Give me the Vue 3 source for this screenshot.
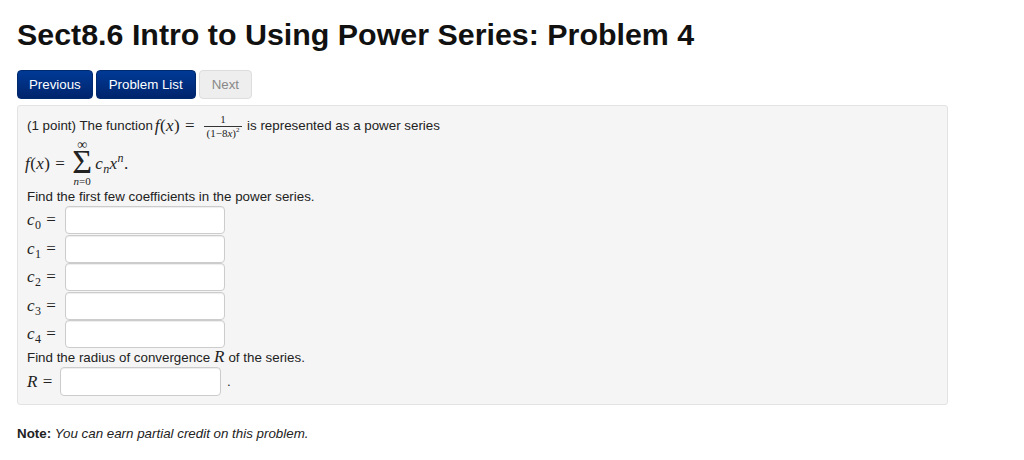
<template>
  <div class="page">
    <h1 class="title">Sect8.6 Intro to Using Power Series: Problem 4</h1>

    <div class="nav">
      <button type="button" class="btn prev">Previous</button>
      <button type="button" class="btn">Problem List</button>
      <button type="button" class="btn disabled">Next</button>
    </div>

    <div class="problem">
      <div class="line intro">
        <span>(1 point) The function</span>
        <span class="math fx"><i>f</i>(<i>x</i>)<span class="eq">=</span></span>
        <span class="frac">
          <span class="num">1</span>
          <span class="den">(1−8<i>x</i>)<sup>2</sup></span>
        </span>
        <span class="after-frac">is represented as a power series</span>
      </div>

      <div class="series math">
        <span><i>f</i>(<i>x</i>)<span class="eq">=</span></span>
        <span class="sum">
          <span class="limit top">∞</span>
          <span class="sigma">Σ</span>
          <span class="limit"><i>n</i>=0</span>
        </span>
        <span class="term"><i>c<sub>n</sub>x<sup>n</sup></i>.</span>
      </div>

      <div class="line find">Find the first few coefficients in the power series.</div>

      <div class="answers">
        <div v-for="n in coefficients" :key="n" class="answer">
          <span class="math label"><i>c</i><sub>{{ n }}</sub><span class="eq">=</span></span>
          <input type="text" class="field" />
        </div>
      </div>

      <div class="line">Find the radius of convergence <i class="math">R</i> of the series.</div>

      <div class="answer r-row">
        <span class="math label r-label"><i>R</i><span class="eq">=</span></span>
        <input type="text" class="field" />
        <span class="dot">.</span>
      </div>
    </div>

    <p class="note"><b>Note:</b> <i>You can earn partial credit on this problem.</i></p>
  </div>
</template>

<script setup>
const coefficients = [0, 1, 2, 3, 4]
</script>

<style>
html, body {
  background: #fff;
}
</style>

<style scoped>
.page {
  width: 1024px;
  height: 460px;
  overflow: hidden;
  box-sizing: border-box;
  padding: 17px 0 0 17px;
  font-family: "Liberation Sans", Arial, sans-serif;
  font-size: 13.35px;
  color: #222;
}
.title {
  margin: 0;
  font-size: 30.4px;
  line-height: 34px;
  font-weight: 700;
  color: #111;
}
.nav {
  display: flex;
  gap: 3px;
  margin-top: 19px;
}
.btn {
  height: 29px;
  padding: 0 12px;
  border: 1px solid #002a6e;
  border-radius: 4px;
  background: linear-gradient(#003a96, #00246c);
  color: #fff;
  font-family: inherit;
  font-size: 13.3px;
}
.btn.prev {
  padding: 0 11px;
}
.btn.disabled {
  border-color: #ddd;
  background: #eee;
  color: #888;
}
.problem {
  width: 931px;
  height: 300px;
  box-sizing: border-box;
  margin-top: 6px;
  padding: 0 0 0 9px;
  background: #f5f5f5;
  border: 1px solid #e3e3e3;
  border-radius: 3px;
}
.line {
  line-height: 18px;
}
.math {
  font-family: "Liberation Serif", "Times New Roman", serif;
  font-size: 17px;
  letter-spacing: 0.4px;
}
.eq {
  margin: 0 7px 0 5px;
}
.intro {
  display: flex;
  align-items: center;
  height: 38px;
  padding-top: 1px;
}
.fx {
  margin-left: 2px;
}
.fx .eq {
  margin-right: 9px;
}
.frac {
  display: inline-flex;
  flex-direction: column;
  align-items: center;
  width: 38px;
  margin-top: -1px;
  font-family: "Liberation Serif", "Times New Roman", serif;
  font-size: 11px;
  line-height: 12px;
}
.num {
  width: 100%;
  text-align: center;
  border-bottom: 1px solid #333;
  padding-bottom: 1px;
}
.den {
  white-space: nowrap;
}
.den sup {
  font-size: 7px;
  line-height: 0;
}
.after-frac {
  margin-left: 5px;
}
.series {
  display: flex;
  align-items: center;
  height: 46px;
  margin-top: -4px;
  margin-left: -2px;
}
.series .eq {
  margin-right: 5px;
}
.sum {
  display: flex;
  flex-direction: column;
  align-items: center;
  width: 24px;
  margin-right: 1px;
}
.limit {
  font-size: 11px;
  line-height: 11px;
  letter-spacing: 0;
}
.limit.top {
  font-size: 14px;
  line-height: 7px;
}
.sigma {
  font-size: 34px;
  line-height: 28px;
  letter-spacing: 0;
}
.term sub,
.term sup {
  font-size: 12px;
  line-height: 0;
}
.find {
  margin-top: 1px;
}
.answers {
  display: flex;
  flex-direction: column;
  gap: 0.5px;
}
.answer {
  display: flex;
  align-items: center;
  height: 28px;
}
.label {
  width: 38px;
}
.label sub {
  font-size: 12px;
  line-height: 0;
}
.label .eq {
  margin: 0 0 0 5px;
}
.field {
  width: 160px;
  height: 100%;
  box-sizing: border-box;
  border: 1px solid #ccc;
  border-radius: 4px;
  background: #fff;
  box-shadow: inset 0 1px 1px rgba(0, 0, 0, 0.07);
  padding: 0;
}
.r-row {
  height: 29px;
}
.r-label {
  width: 33px;
}
.r-row .field {
  width: 161px;
}
.dot {
  margin-left: 6px;
}
.note {
  margin: 21px 0 0;
  line-height: 16px;
  font-size: 13.35px;
}
</style>
